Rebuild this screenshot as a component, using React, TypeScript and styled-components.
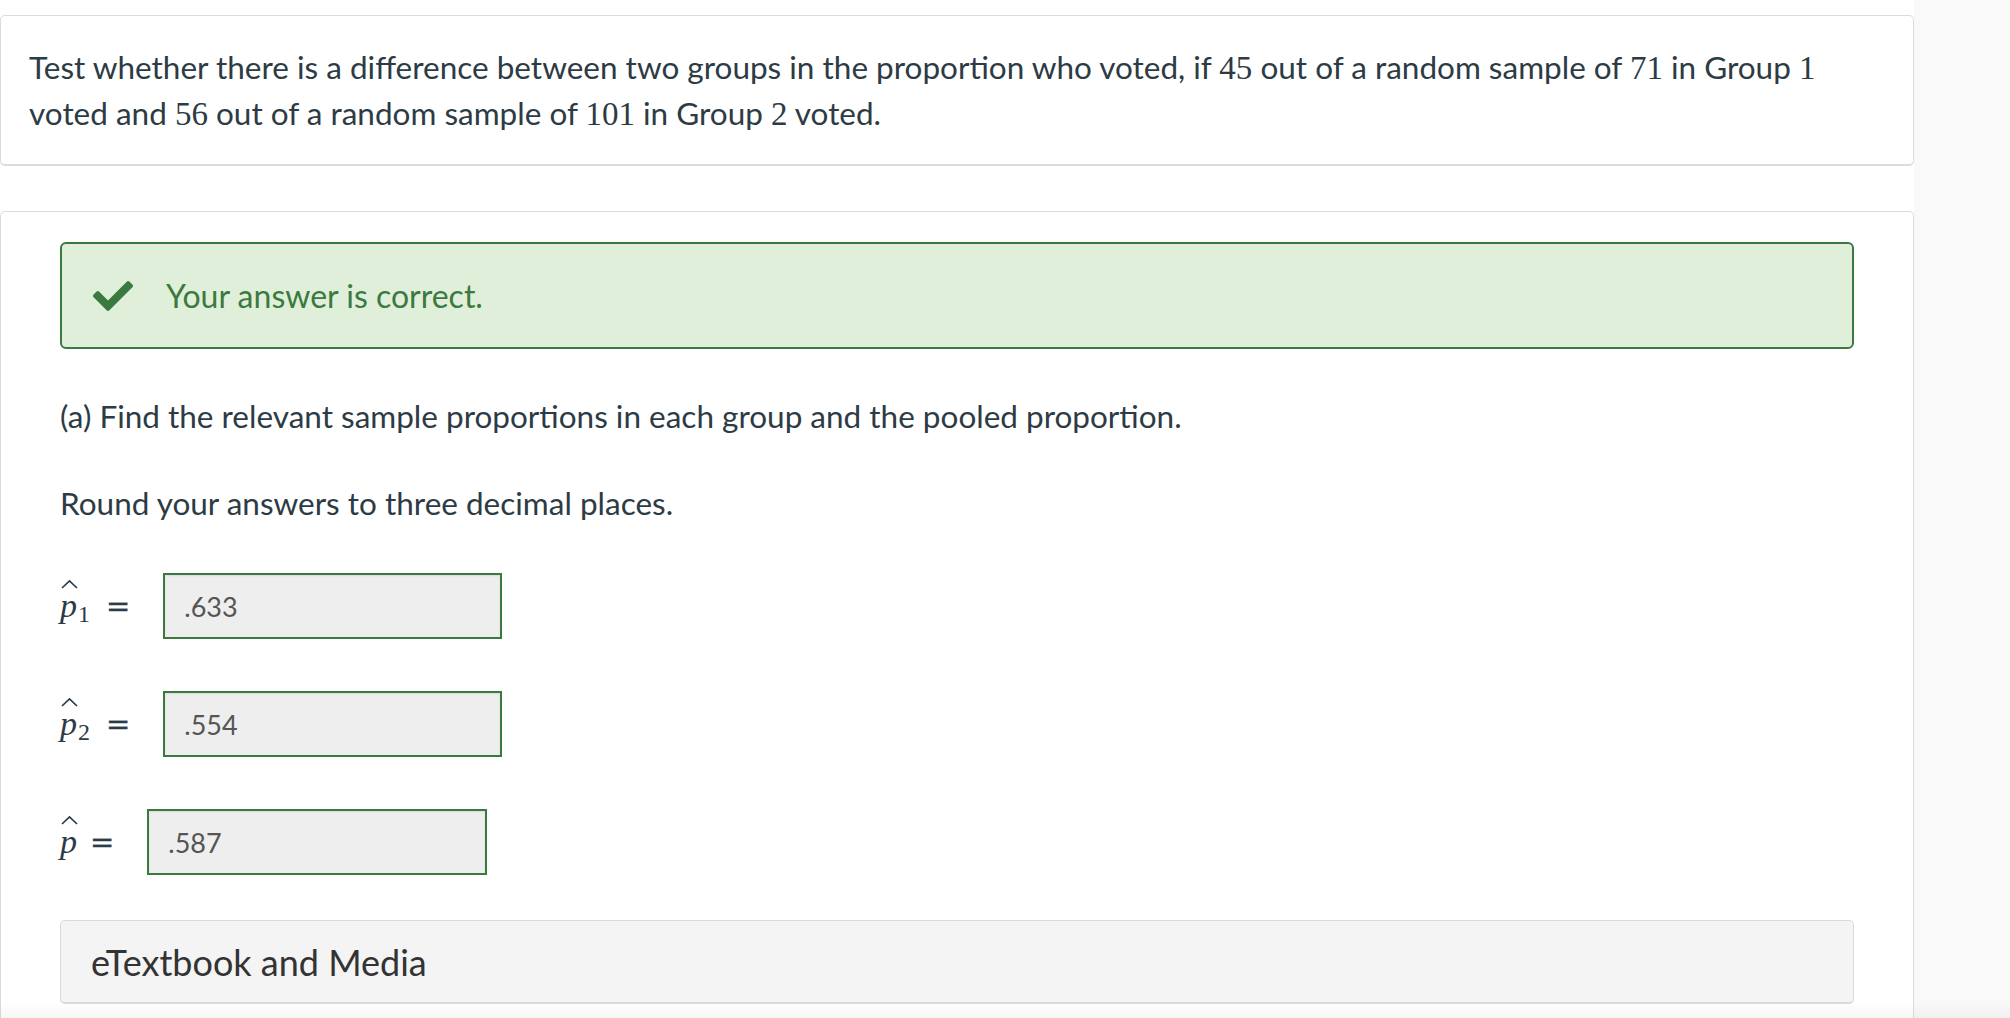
import React from "react";
import styled, { createGlobalStyle } from "styled-components";
import { FaCheck } from "react-icons/fa";

const GlobalStyle = createGlobalStyle`
  html, body {
    margin: 0;
    padding: 0;
    background: #f9f9f9;
  }
  body {
    font-family: Lato, "Open Sans", sans-serif;
    color: #2d3b45;
  }
`;

const Page = styled.div`
  display: flex;
  min-height: 100vh;
  overflow: hidden;
`;

const Main = styled.div`
  width: 1914px;
  flex: none;
  background: #fff;
  padding-top: 15px;
`;

const Side = styled.div`
  flex: 1;
  background: #f9f9f9;
`;

const Card = styled.section<{ $gap?: number }>`
  margin-bottom: ${(p) => p.$gap ?? 0}px;
  border: 1px solid #dcdcdc;
  border-bottom-width: 2px;
  border-radius: 5px;
  background: #fff;
`;

const Question = styled.p`
  margin: 0;
  padding: 29px 28px 27px;
  font-size: 31.5px;
  line-height: 45px;
`;

const Num = styled.span`
  font-family: "Liberation Serif", "Times New Roman", serif;
  font-size: 33px;
`;

const Body = styled.div`
  padding: 30px 59px 120px;
`;

const Alert = styled.div`
  display: flex;
  align-items: center;
  gap: 33px;
  height: 103px;
  padding-left: 31px;
  border: 2px solid #3b7a3f;
  border-radius: 6px;
  background: #e0efda;
  color: #3b7a3f;
  font-size: 32px;
  margin-bottom: 45px;
`;

const Para = styled.p<{ $after: number }>`
  margin: 0 0 ${(p) => p.$after}px;
  font-size: 31.5px;
  line-height: 45px;
`;

const Row = styled.div<{ $after: number }>`
  display: flex;
  align-items: center;
  margin-bottom: ${(p) => p.$after}px;
`;

const Label = styled.span`
  display: inline-flex;
  align-items: baseline;
  font-family: "Liberation Serif", "Times New Roman", serif;
  color: #2d3b45;
`;

const Hat = styled.span`
  position: relative;
  display: inline-block;
  font-style: italic;
  font-size: 34px;
  line-height: 1;
`;

const Caret = styled.svg`
  position: absolute;
  left: 1px;
  top: -10px;
`;

const Sub = styled.span`
  position: relative;
  top: 5px;
  font-size: 24px;
  margin-left: 1px;
  line-height: 1;
`;

const Eq = styled.span<{ $left: number }>`
  font-family: "DejaVu Serif", serif;
  font-size: 29px;
  line-height: 1;
  color: #2d3b45;
  -webkit-text-stroke: 0.4px #2d3b45;
  margin: 0 33px 0 ${(p) => p.$left}px;
`;

const Field = styled.div<{ $w: number }>`
  box-sizing: border-box;
  width: ${(p) => p.$w}px;
  height: 66px;
  display: flex;
  align-items: center;
  padding-left: 19px;
  border: 2px solid #3b7a3f;
  background: #eeeeee;
  box-shadow: inset 0 1px 2px rgba(0, 0, 0, 0.08);
  color: #555;
  font-size: 27px;
`;

const Media = styled.div`
  display: flex;
  align-items: center;
  height: 81px;
  padding-left: 30px;
  border: 1px solid #dadada;
  border-bottom-width: 2px;
  border-radius: 5px;
  background: #f4f4f4;
  color: #333;
  font-size: 36px;
`;

const Fade = styled.div`
  position: fixed;
  left: 0;
  right: 0;
  bottom: 0;
  height: 16px;
  background: linear-gradient(rgba(0, 0, 0, 0), rgba(0, 0, 0, 0.035));
  pointer-events: none;
`;

const PHat: React.FC<{ sub?: string }> = ({ sub }) => (
  <Label>
    <Hat>
      <Caret width="17" height="10" viewBox="0 0 17 10">
        <path d="M1 9 L8.5 2 L16 9" fill="none" stroke="#2d3b45" strokeWidth="1.7" />
      </Caret>
      p
    </Hat>
    {sub && <Sub>{sub}</Sub>}
  </Label>
);

const rows = [
  { sub: "1", value: ".633", eq: 16, width: 339, after: 52 },
  { sub: "2", value: ".554", eq: 16, width: 339, after: 52 },
  { sub: undefined, value: ".587", eq: 13, width: 340, after: 45 },
];

export default function App() {
  return (
    <>
      <GlobalStyle />
      <Page>
        <Main>
          <Card $gap={45}>
            <Question>
              Test whether there is a difference between two groups in the proportion who voted, if{" "}
              <Num>45</Num> out of a random sample of <Num>71</Num> in Group <Num>1</Num> voted and{" "}
              <Num>56</Num> out of a random sample of <Num>101</Num> in Group <Num>2</Num> voted.
            </Question>
          </Card>
          <Card>
            <Body>
              <Alert>
                <FaCheck size={40} />
                <span>Your answer is correct.</span>
              </Alert>
              <Para $after={42}>
                (a) Find the relevant sample proportions in each group and the pooled proportion.
              </Para>
              <Para $after={47}>Round your answers to three decimal places.</Para>
              {rows.map((r) => (
                <Row key={r.value} $after={r.after}>
                  <PHat sub={r.sub} />
                  <Eq $left={r.eq}>=</Eq>
                  <Field $w={r.width}>{r.value}</Field>
                </Row>
              ))}
              <Media>eTextbook and Media</Media>
            </Body>
          </Card>
        </Main>
        <Side />
      </Page>
      <Fade />
    </>
  );
}
